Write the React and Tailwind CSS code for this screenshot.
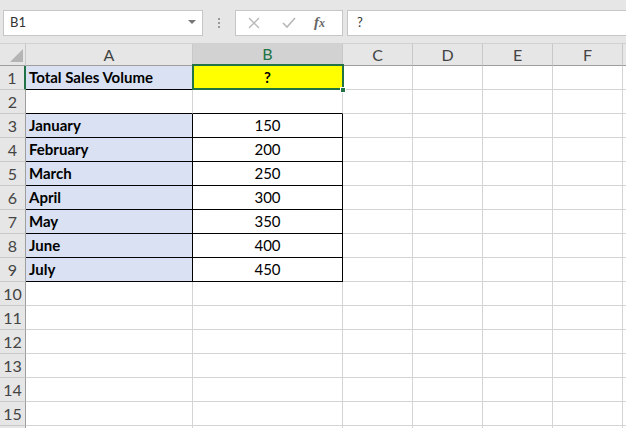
import React from 'react';

const cols = [
  { key: 'A', w: 'w-[167px]' },
  { key: 'B', w: 'w-[150px]' },
  { key: 'C', w: 'w-[70px]' },
  { key: 'D', w: 'w-[70px]' },
  { key: 'E', w: 'w-[70px]' },
  { key: 'F', w: 'w-[70px]' },
];

const months = [
  ['January', 150],
  ['February', 200],
  ['March', 250],
  ['April', 300],
  ['May', 350],
  ['June', 400],
  ['July', 450],
];

function Cell({ w, className = '', children }) {
  return (
    <div className={`${w} h-full shrink-0 border-r border-b flex items-center ${className}`}>
      {children}
    </div>
  );
}

function Row({ n, children, selected }) {
  return (
    <div className="flex h-[24px]">
      <div className={`w-[26px] shrink-0 h-full bg-[#e6e6e6] border-b border-[#c8c8c8] border-r flex items-center justify-center text-[16px] text-[#444] ${selected ? 'border-r-[#217346] border-r-2 bg-[#d2d2d2]' : 'border-r-[#9e9e9e]'}`}>
        {n}
      </div>
      {children}
      <div className="flex-1 border-b border-[#d4d4d4]" />
    </div>
  );
}

function EmptyCells({ from = 0 }) {
  return cols.slice(from).map(c => (
    <Cell key={c.key} w={c.w} className="border-[#d4d4d4]" />
  ));
}

export default function App() {
  return (
    <div className="w-[626px] h-[428px] overflow-hidden bg-white" style={{ fontFamily: 'Lato, "Open Sans", sans-serif' }}>
      {/* formula bar */}
      <div className="h-[44px] bg-[#e6e6e6] flex items-center pt-[2px] border-b border-[#d0d0d0]">
        <div className="ml-[3px] w-[200px] h-[26px] bg-white border border-[#c6c6c6] flex items-center justify-between px-[6px]">
          <span className="text-[13px] text-[#333]">B1</span>
          <svg width="8" height="5" viewBox="0 0 8 5"><path d="M0 0h8L4 4z" fill="#777" /></svg>
        </div>
        <div className="w-[32px] flex flex-col items-center gap-[2px]">
          <span className="w-[2px] h-[2px] bg-[#9a9a9a]" />
          <span className="w-[2px] h-[2px] bg-[#9a9a9a]" />
          <span className="w-[2px] h-[2px] bg-[#9a9a9a]" />
        </div>
        <div className="w-[108px] h-[26px] bg-white border border-[#c6c6c6] flex items-center">
          <svg className="ml-[12px]" width="12" height="12" viewBox="0 0 12 12"><path d="M1 1l10 10M11 1L1 11" stroke="#b8b8b8" strokeWidth="1.3" /></svg>
          <svg className="ml-[22px]" width="14" height="12" viewBox="0 0 14 12"><path d="M1 6l4 4 8-9" stroke="#b8b8b8" strokeWidth="1.6" fill="none" /></svg>
          <span className="ml-[18px] text-[15px] italic font-bold text-[#666]" style={{ fontFamily: '"Liberation Serif", serif' }}>f<span className="text-[12px]">x</span></span>
        </div>
        <div className="ml-[4px] flex-1 h-[26px] bg-white border border-[#c6c6c6] border-r-0 flex items-center pl-[9px] text-[13px] text-[#333]">?</div>
      </div>

      {/* column headers */}
      <div className="flex h-[22px] bg-[#e6e6e6]">
        <div className="w-[26px] shrink-0 h-full border-r border-b border-[#9e9e9e] border-r-[#c8c8c8] relative">
          <svg className="absolute right-[2px] bottom-[3px]" width="13" height="13" viewBox="0 0 13 13"><path d="M13 0v13H0z" fill="#b4b4b4" /></svg>
        </div>
        {cols.map(c => (
          <div
            key={c.key}
            className={`${c.w} shrink-0 h-full border-r border-[#c8c8c8] flex items-center justify-center text-[16px] ${c.key === 'B' ? 'bg-[#d2d2d2] text-[#217346] border-b-2 border-b-[#217346]' : 'text-[#444] border-b border-b-[#9e9e9e]'}`}
          >
            {c.key}
          </div>
        ))}
        <div className="flex-1 border-b border-[#9e9e9e]" />
      </div>

      <div className="text-[15px] text-black">
        <Row n={1} selected>
          <Cell w="w-[167px]" className="bg-[#d9e1f2] border-[#d4d4d4] border-b-black font-bold pl-[3px]">Total Sales Volume</Cell>
          <Cell w="w-[150px]" className="bg-[#ffff00] border-[#d4d4d4] border-b-black font-bold justify-center relative">
            ?
            <div className="absolute left-[-1px] top-[-2px] right-[-2px] bottom-[-1px] border-2 border-[#217346]" />
            <div className="absolute right-[-4px] bottom-[-4px] w-[6px] h-[6px] bg-[#217346] border border-white" />
          </Cell>
          <EmptyCells from={2} />
        </Row>
        <Row n={2}>
          <Cell w="w-[167px]" className="border-[#d4d4d4] border-b-black" />
          <Cell w="w-[150px]" className="border-[#d4d4d4] border-b-black" />
          <EmptyCells from={2} />
        </Row>
        {months.map(([m, v], i) => (
          <Row key={m} n={i + 3}>
            <Cell w="w-[167px]" className="bg-[#d9e1f2] border-black font-bold pl-[3px]">{m}</Cell>
            <Cell w="w-[150px]" className="border-black justify-center">{v}</Cell>
            <EmptyCells from={2} />
          </Row>
        ))}
        {[10, 11, 12, 13, 14, 15].map(n => (
          <Row key={n} n={n}>
            <EmptyCells />
          </Row>
        ))}
        <Row n="">
          <EmptyCells />
        </Row>
      </div>
    </div>
  );
}
